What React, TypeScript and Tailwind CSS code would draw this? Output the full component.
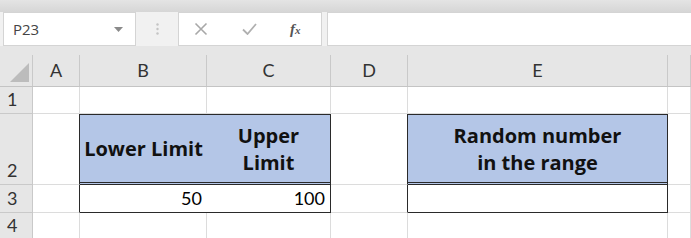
import React from "react";

const COLS = ["A", "B", "C", "D", "E", ""];
const GRID = "grid grid-cols-[33px_47px_127px_124px_77px_260px_1fr]";

function FormulaBar() {
  return (
    <div className="relative">
      <div className="h-[12px] bg-gradient-to-b from-[#e4e4e4] to-[#d6d6d6]" />
      <div className="flex h-[34px] items-stretch bg-[#f1f1f1]">
        <div className="ml-[3px] flex w-[133px] items-center justify-between border border-[#d4d4d4] bg-white pl-[9px] pr-[12px]">
          <span className="font-['Open_Sans'] text-[15px] text-[#444]">P23</span>
          <svg width="9" height="5" viewBox="0 0 9 5">
            <path d="M0 0 H9 L4.5 5 Z" fill="#8a8a8a" />
          </svg>
        </div>
        <div className="flex w-[42px] items-center justify-center bg-[#f1f1f1]">
          <svg width="3" height="12" viewBox="0 0 3 12">
            <circle cx="1.5" cy="1.5" r="1.2" fill="#c4c4c4" />
            <circle cx="1.5" cy="6" r="1.2" fill="#c4c4c4" />
            <circle cx="1.5" cy="10.5" r="1.2" fill="#c4c4c4" />
          </svg>
        </div>
        <div className="flex w-[144px] items-center border border-[#d4d4d4] bg-white">
          <svg className="ml-[15px]" width="14" height="14" viewBox="0 0 14 14">
            <path d="M1.5 1.5 L12.5 12.5 M12.5 1.5 L1.5 12.5" stroke="#a8a8a8" strokeWidth="1.6" />
          </svg>
          <svg className="ml-[34px]" width="15" height="12" viewBox="0 0 15 12">
            <path d="M1 6.5 L5.5 11 L14 1" fill="none" stroke="#b0b0b0" strokeWidth="1.8" />
          </svg>
          <span className="ml-[33px] font-['Liberation_Serif'] text-[15px] font-bold italic text-[#555]">
            f<span className="text-[11px]">x</span>
          </span>
        </div>
        <div className="ml-[5px] flex-1 border border-r-0 border-[#d4d4d4] bg-white" />
      </div>
    </div>
  );
}

function HeaderRow() {
  return (
    <div className="bg-[#e6e6e6] pt-[9px]">
      <div className={`${GRID} h-[32px] border-b border-[#c4c4c4]`}>
        <div className="flex items-end justify-end border-r border-[#c9c9c9] pb-[4px] pr-[3px]">
          <svg width="19" height="19" viewBox="0 0 19 19">
            <path d="M19 0 V19 H0 Z" fill="#bcbcbc" />
          </svg>
        </div>
        {COLS.map((c, i) => (
          <div
            key={i}
            className="flex items-center justify-center border-r border-[#c9c9c9] font-['Lato'] text-[18px] text-[#333]"
          >
            {c}
          </div>
        ))}
      </div>
    </div>
  );
}

function RowHead({ n }: { n: number }) {
  return (
    <div className="flex items-end border-r border-b border-[#c9c9c9] bg-[#e6e6e6] pb-[2px] pl-[7px] font-['Lato'] text-[18px] leading-[24px] text-[#333]">
      {n}
    </div>
  );
}

function Cell({ className = "" }: { className?: string }) {
  return <div className={`border-r border-b border-[#dcdcdc] ${className}`} />;
}

export default function App() {
  const head = "flex items-center justify-center bg-[#b4c6e7] text-center font-['Open_Sans'] text-[20px] font-bold leading-[27px] text-[#111]";
  const num = "flex items-center justify-end pr-[5px] font-['Lato'] text-[18px] text-black";

  return (
    <div className="h-[238px] w-[691px] overflow-hidden bg-white">
      <FormulaBar />
      <HeaderRow />

      {/* row 1 */}
      <div className={`${GRID} h-[27px]`}>
        <RowHead n={1} />
        <Cell />
        <Cell />
        <Cell />
        <Cell />
        <Cell />
        <Cell />
      </div>

      {/* row 2 */}
      <div className={`${GRID} h-[71px]`}>
        <RowHead n={2} />
        <Cell className="border-r-[#2a2a2a]" />
        <div className={`${head} border-t border-[#2a2a2a] border-b-[3px] border-b-[#2a2a2a] border-double`}>
          Lower Limit
        </div>
        <div className={`${head} border-t border-r border-[#2a2a2a] border-b-[3px] border-b-[#2a2a2a] border-double`}>
          Upper
          <br />
          Limit
        </div>
        <Cell className="border-r-[#2a2a2a]" />
        <div className={`${head} border-t border-r border-[#2a2a2a] border-b-[3px] border-b-[#2a2a2a] border-double`}>
          Random number
          <br />
          in the range
        </div>
        <Cell />
      </div>

      {/* row 3 */}
      <div className={`${GRID} h-[28px]`}>
        <RowHead n={3} />
        <Cell className="border-r-[#2a2a2a]" />
        <div className={`${num} border-b border-[#2a2a2a]`}>50</div>
        <div className={`${num} border-r border-b border-[#2a2a2a] pr-[4px]`}>100</div>
        <Cell className="border-r-[#2a2a2a]" />
        <div className="border-r border-b border-[#2a2a2a]" />
        <Cell />
      </div>

      {/* row 4 */}
      <div className={`${GRID} h-[27px]`}>
        <RowHead n={4} />
        <Cell />
        <Cell />
        <Cell />
        <Cell />
        <Cell />
        <Cell />
      </div>
    </div>
  );
}
